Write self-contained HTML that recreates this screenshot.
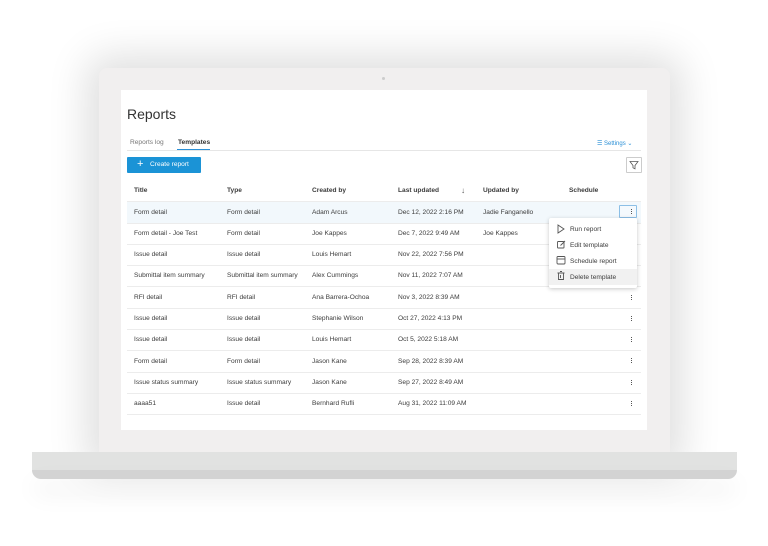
<!DOCTYPE html>
<html><head><meta charset="utf-8"><style>
*{margin:0;padding:0;box-sizing:border-box}
body{width:768px;height:546px;background:#fff;position:relative;overflow:hidden;font-family:"Liberation Sans",sans-serif;color:#3c3c3c}
.abs{position:absolute}
.lid{left:99px;top:68px;width:571px;height:390px;background:#f1efef;border-radius:8px 8px 0 0;box-shadow:0 0 40px 12px rgba(0,0,0,0.13)}
.screen{left:121px;top:90px;width:526px;height:340px;background:#fff}
.base1{left:32px;top:452px;width:705px;height:18px;background:#e1e2e1}
.base2{left:32px;top:470px;width:705px;height:9px;background:#d3d3d3;border-radius:0 0 12px 12px;box-shadow:0 14px 24px rgba(0,0,0,0.08)}
.t{position:absolute;font-size:6.6px;white-space:nowrap;color:#3c3c3c}
.h{font-weight:bold;color:#3c3c3c}
.row{position:absolute;left:127px;width:514px;height:1px;background:#ececec}
.dot{position:absolute;width:1.5px;height:5px;border-left:1.4px dotted #555}
.mi{position:absolute;left:570px;font-size:6.6px;color:#3c3c3c}
</style></head><body>
<div class="abs lid"></div>
<div class="abs" style="left:382px;top:77px;width:3px;height:3px;border-radius:50%;background:#ccc"></div>
<div class="abs screen"></div>
<div class="abs base1"></div>
<div class="abs base2"></div>

<div class="t" style="left:127px;top:106px;font-size:14px;color:#333">Reports</div>
<div class="t" style="left:130px;top:139px;color:#777">Reports log</div>
<div class="t" style="left:178px;top:139px;font-weight:bold;color:#333">Templates</div>
<div class="abs" style="left:127px;top:149.5px;width:514px;height:1px;background:#e6e6e6"></div>
<div class="abs" style="left:177px;top:148.5px;width:33px;height:1.5px;background:#2a8fd6"></div>
<div class="t" style="left:597px;top:140px;color:#2a8fd6;font-size:6px">☰ Settings ⌄</div>

<div class="abs" style="left:127px;top:157px;width:74px;height:16px;background:#1b93d6;border-radius:1px"></div>
<div class="t" style="left:137px;top:158.5px;color:#fff;font-size:11px;line-height:11px">+</div>
<div class="t" style="left:150px;top:161px;color:#fff;font-size:6.6px">Create report</div>

<div class="abs" style="left:626px;top:157px;width:16px;height:16px;border:1px solid #ccc;border-radius:1px"></div>
<svg class="abs" style="left:629px;top:160px" width="10" height="10" viewBox="0 0 10 10"><path d="M1 1.5H9L6 5.5V8.8L4 7.8V5.5Z" fill="none" stroke="#555" stroke-width="0.8"/></svg>

<div class="t h" style="left:134px;top:187px">Title</div>
<div class="t h" style="left:227px;top:187px">Type</div>
<div class="t h" style="left:312px;top:187px">Created by</div>
<div class="t h" style="left:398px;top:187px">Last updated</div>
<div class="t" style="left:461px;top:186px;font-size:8px;color:#555">↓</div>
<div class="t h" style="left:483px;top:187px">Updated by</div>
<div class="t h" style="left:569px;top:187px">Schedule</div>
<div class="row" style="top:201px"></div>
<div class="abs" style="left:127px;top:202px;width:514px;height:20.5px;background:#f2f8fc"></div>
<div class="row" style="top:222.5px"></div>
<div class="row" style="top:243.8px"></div>
<div class="row" style="top:265.1px"></div>
<div class="row" style="top:286.4px"></div>
<div class="row" style="top:307.7px"></div>
<div class="row" style="top:329px"></div>
<div class="row" style="top:350.3px"></div>
<div class="row" style="top:371.6px"></div>
<div class="row" style="top:392.9px"></div>
<div class="row" style="top:414.2px"></div>

<div class="t" style="left:134px;top:208.5px">Form detail</div><div class="t" style="left:227px;top:208.5px">Form detail</div><div class="t" style="left:312px;top:208.5px">Adam Arcus</div><div class="t" style="left:398px;top:208.5px">Dec 12, 2022 2:16 PM</div><div class="t" style="left:483px;top:208.5px">Jadie Fanganello</div>
<div class="t" style="left:134px;top:229.8px">Form detail - Joe Test</div><div class="t" style="left:227px;top:229.8px">Form detail</div><div class="t" style="left:312px;top:229.8px">Joe Kappes</div><div class="t" style="left:398px;top:229.8px">Dec 7, 2022 9:49 AM</div><div class="t" style="left:483px;top:229.8px">Joe Kappes</div>
<div class="t" style="left:134px;top:251.1px">Issue detail</div><div class="t" style="left:227px;top:251.1px">Issue detail</div><div class="t" style="left:312px;top:251.1px">Louis Hemart</div><div class="t" style="left:398px;top:251.1px">Nov 22, 2022 7:56 PM</div>
<div class="t" style="left:134px;top:272.4px">Submittal item summary</div><div class="t" style="left:227px;top:272.4px">Submittal item summary</div><div class="t" style="left:312px;top:272.4px">Alex Cummings</div><div class="t" style="left:398px;top:272.4px">Nov 11, 2022 7:07 AM</div>
<div class="t" style="left:134px;top:293.7px">RFI detail</div><div class="t" style="left:227px;top:293.7px">RFI detail</div><div class="t" style="left:312px;top:293.7px">Ana Barrera-Ochoa</div><div class="t" style="left:398px;top:293.7px">Nov 3, 2022 8:39 AM</div>
<div class="t" style="left:134px;top:315px">Issue detail</div><div class="t" style="left:227px;top:315px">Issue detail</div><div class="t" style="left:312px;top:315px">Stephanie Wilson</div><div class="t" style="left:398px;top:315px">Oct 27, 2022 4:13 PM</div>
<div class="t" style="left:134px;top:336.3px">Issue detail</div><div class="t" style="left:227px;top:336.3px">Issue detail</div><div class="t" style="left:312px;top:336.3px">Louis Hemart</div><div class="t" style="left:398px;top:336.3px">Oct 5, 2022 5:18 AM</div>
<div class="t" style="left:134px;top:357.6px">Form detail</div><div class="t" style="left:227px;top:357.6px">Form detail</div><div class="t" style="left:312px;top:357.6px">Jason Kane</div><div class="t" style="left:398px;top:357.6px">Sep 28, 2022 8:39 AM</div>
<div class="t" style="left:134px;top:378.9px">Issue status summary</div><div class="t" style="left:227px;top:378.9px">Issue status summary</div><div class="t" style="left:312px;top:378.9px">Jason Kane</div><div class="t" style="left:398px;top:378.9px">Sep 27, 2022 8:49 AM</div>
<div class="t" style="left:134px;top:400.2px">aaaa51</div><div class="t" style="left:227px;top:400.2px">Issue detail</div><div class="t" style="left:312px;top:400.2px">Bernhard Rufli</div><div class="t" style="left:398px;top:400.2px">Aug 31, 2022 11:09 AM</div>

<div class="abs" style="left:619px;top:205px;width:18px;height:13px;border:1px solid #8cbfe6;border-radius:1px;background:#f4f9fd"></div>
<div class="dot" style="left:631px;top:209px"></div>
<div class="dot" style="left:631px;top:295px"></div>
<div class="dot" style="left:631px;top:316px"></div>
<div class="dot" style="left:631px;top:337px"></div>
<div class="dot" style="left:631px;top:358px"></div>
<div class="dot" style="left:631px;top:380px"></div>
<div class="dot" style="left:631px;top:401px"></div>

<div class="abs" style="left:549px;top:218px;width:88px;height:70px;background:#fff;border-radius:2px;box-shadow:0 1px 4px rgba(0,0,0,0.22)"></div>
<div class="abs" style="left:549px;top:269px;width:88px;height:16px;background:#f1f1f1"></div>
<svg class="abs" style="left:556px;top:224px" width="10" height="60" viewBox="0 0 10 60" fill="none" stroke="#555" stroke-width="0.9">
<path d="M2 1L8 5L2 9Z"/>
<rect x="1.5" y="17.5" width="6.5" height="6.5" rx="0.8"/><path d="M4.5 21.5L9 17"/>
<rect x="1" y="32.5" width="8" height="7.5" rx="1"/><path d="M1 35H9"/>
<path d="M2.5 49H7.5V55.5H2.5Z M1.5 49H8.5 M4 47.5H6 M4.5 51V54"/>
</svg>
<div class="mi" style="top:225.5px">Run report</div>
<div class="mi" style="top:241.5px">Edit template</div>
<div class="mi" style="top:257.5px">Schedule report</div>
<div class="mi" style="top:273.5px">Delete template</div>
</body></html>
